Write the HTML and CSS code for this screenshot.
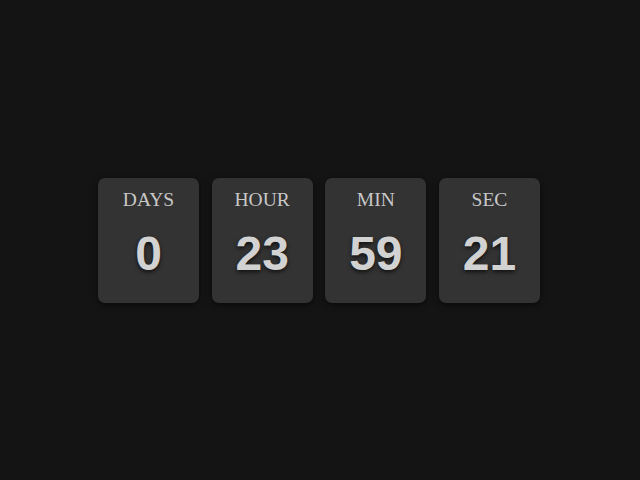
FILE: index.html
```html
<!DOCTYPE html>
<html>
<head>
<meta charset="utf-8">
<link rel="stylesheet" href="styles.css">
</head>
<body>
<div class="countdown">
  <div class="card"><div class="label">DAYS</div><div class="value">0</div></div>
  <div class="card"><div class="label">HOUR</div><div class="value">23</div></div>
  <div class="card"><div class="label">MIN</div><div class="value">59</div></div>
  <div class="card"><div class="label">SEC</div><div class="value">21</div></div>
</div>
</body>
</html>
```
FILE: styles.css
```css
html, body {
  margin: 0;
  height: 100%;
  background: #141414;
}
body {
  display: flex;
  align-items: center;
  justify-content: center;
}
.countdown {
  display: flex;
  gap: 12.67px;
  margin-left: -2px;
  margin-top: 1px;
}
.card {
  width: 101px;
  height: 125px;
  box-sizing: border-box;
  padding-top: 10px;
  background: #333333;
  border-radius: 7px;
  box-shadow: 0 2px 6px rgba(0, 0, 0, 0.5);
  text-align: center;
}
.label {
  font-family: "Liberation Serif", serif;
  font-size: 19.5px;
  line-height: 23px;
  color: #c8c8c8;
}
.value {
  margin-top: 15px;
  font-family: "Liberation Sans", Arial, sans-serif;
  font-weight: bold;
  font-size: 48px;
  line-height: 55px;
  color: #d2d2d2;
  text-shadow: 0 2px 4px rgba(0, 0, 0, 0.7);
}
```
